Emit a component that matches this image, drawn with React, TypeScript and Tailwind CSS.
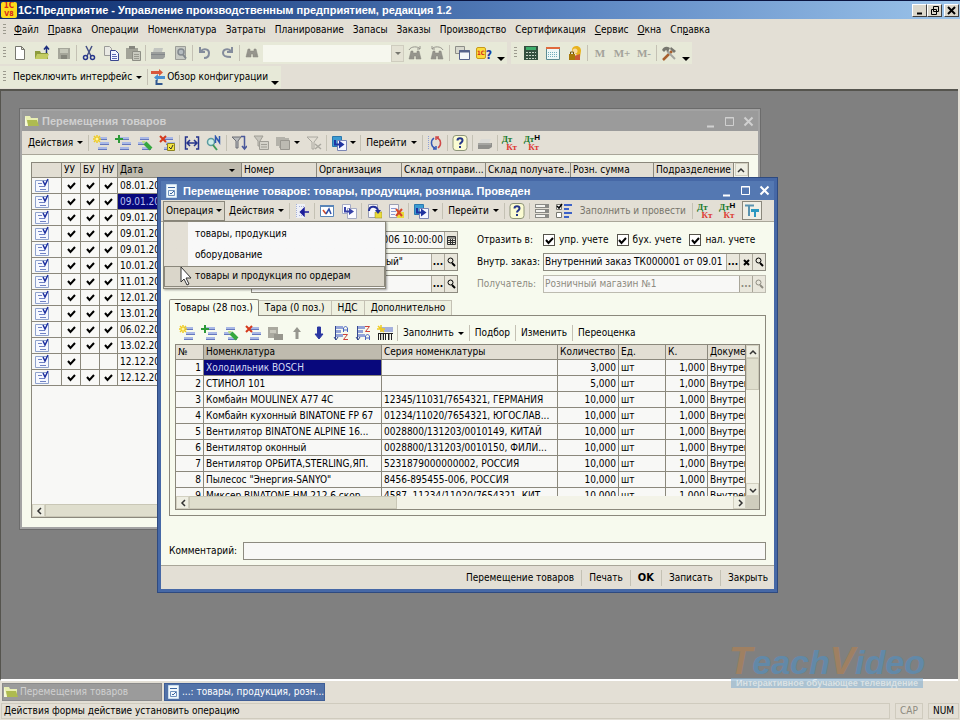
import React from "react";

type Kids = { children?: React.ReactNode };

/* ---------- icon drawings ---------- */

function Svg({ children, w = 16 }: Kids & { w?: number }) {
  return (
    <svg width={w} height="16" viewBox={`0 0 ${w} 16`} fill="none" className="block shrink-0" aria-hidden="true">
      {children}
    </svg>
  );
}

function Rows({ grey }: { grey?: boolean }) {
  const a = grey ? "#b4b2aa" : "#a9b8e6";
  const b = grey ? "#98968f" : "#6678bd";
  return (
    <>
      <path d="M5 2h9v3H5zM7 7h9v3H7zM5 12h9v3H5z" fill={a} />
      <path d="M5 4.500h9M7 9.500h9M5 14.500h9" stroke={b} />
    </>
  );
}

function Binoculars({ x = 0, y = 0 }: { x?: number; y?: number }) {
  return (
    <path
      transform={`translate(${x} ${y})`}
      d="M4 4h2v2h4V4h2l2 8h-5V9H7v3H2zM4 9v2M12 9v2"
      fill="#96958d"
      stroke="#85847d"
      strokeWidth="0.5"
    />
  );
}

const icons: Record<string, React.ReactNode> = {
  newDoc: <path d="M3.500 1.500h6l3 3v10h-9zM9.500 1.500v3h3" fill="#fff" stroke="#77776f" />,
  open: (
    <>
      <path d="M1 6h5l1 2h7v6H1z" fill="#8d9b3c" />
      <path d="M3 9h12l-2 5H1z" fill="#c3cc62" />
      <path d="M12.500 8V2M10 4.500 12.500 1.500 15 4.500" stroke="#1b2d7e" strokeWidth="1.500" />
    </>
  ),
  save: (
    <>
      <path d="M2 3h12v11H2z" fill="#a5a69a" />
      <path d="M4 4h8v4H4z" fill="#c5c7b9" />
      <path d="M5 10h6v4H5z" fill="#85867c" />
    </>
  ),
  cut: (
    <>
      <path d="M5 1l5 10M11 1 6 11" stroke="#444f85" strokeWidth="1.500" />
      <circle cx="4.500" cy="12.500" r="2" stroke="#26368c" strokeWidth="1.500" />
      <circle cx="11.500" cy="12.500" r="2" stroke="#26368c" strokeWidth="1.500" />
    </>
  ),
  copy: (
    <>
      <path d="M1.500 1.500h5l2 2v7h-7z" fill="#e9e9e4" stroke="#9a9a98" />
      <path d="M7.500 5.500h5l3 3v7h-8z" fill="#f2f4ff" stroke="#3a468f" />
      <path d="M9 9.500h4M9 11.500h5M9 13.500h5" stroke="#5b69b5" />
    </>
  ),
  paste: (
    <>
      <path d="M1 3h12v11H1z" fill="#a2a398" />
      <path d="M4 1h6v3H4z" fill="#85867d" />
      <path d="M7.500 6.500h8v9h-8z" fill="#c9cabf" stroke="#8d8e85" />
      <path d="M9 9.500h5M9 11.500h5M9 13.500h5" stroke="#999a90" />
    </>
  ),
  print: (
    <>
      <path d="M4 3h9l-1 4H3z" fill="#c2c5c0" />
      <path d="M1 7h14v5l-2 2H1z" fill="#9c9f9d" />
      <path d="M1 9.500h14" stroke="#83878a" />
    </>
  ),
  preview: (
    <>
      <path d="M3.500 1.500h10v13h-10z" fill="#c7cac4" stroke="#9b9d97" />
      <circle cx="9" cy="7" r="3" fill="#b5bcc0" stroke="#83898e" strokeWidth="1.500" />
      <path d="M11 9.500l3 4" stroke="#83898e" strokeWidth="2" />
    </>
  ),
  undo: <path d="M3 2v5h5M4 6c3-3 8-2 8 2 0 3-2 5-5 5" stroke="#848c9c" strokeWidth="2" />,
  redo: <path d="M13 2v5H8M12 6C9 3 4 4 4 8c0 3 2 4 8 4" stroke="#848c9c" strokeWidth="2" />,
  find: <Binoculars />,
  findNext: (
    <>
      <Binoculars y={2} />
      <path d="M2 5c2-4 9-4 11-1M13 1v3h-3" stroke="#96958d" />
    </>
  ),
  findPrev: (
    <>
      <Binoculars y={2} />
      <path d="M14 5C12 1 5 1 3 4M3 1v3h3" stroke="#96958d" />
    </>
  ),
  windows: (
    <>
      <path d="M1.500 1.500h9v7h-9z" fill="#d7d8cd" stroke="#8d8e88" />
      <path d="M5.500 5.500h10v9h-10z" fill="#f5f6fa" stroke="#56628c" />
      <path d="M5 6.500h11" stroke="#56628c" strokeWidth="2" />
    </>
  ),
  calc: (
    <>
      <path d="M1 1h14v14H1z" fill="#35503f" />
      <path d="M3 2h10v3H3z" fill="#3fae6c" />
      <path d="M3 7.500h10M3 10.500h10M3 13.500h10" stroke="#c8d3c6" strokeDasharray="2 1" />
    </>
  ),
  calendar: (
    <>
      <path d="M1.500 2.500h13v12h-13z" fill="#eef8f8" stroke="#5d8c93" />
      <path d="M1 3h14" stroke="#e0693c" strokeWidth="2" />
      <path d="M3 7.500h10M3 9.500h10M3 11.500h10" stroke="#71aebc" strokeDasharray="1 1" />
    </>
  ),
  user: (
    <>
      <path d="M5 6c-1-6 9-7 9 0l-1 6-3-2z" fill="#e8b21c" />
      <circle cx="8" cy="6" r="2.500" fill="#f5d9a0" />
      <path d="M7 11l6-2v6H7z" fill="#cb5a36" />
      <path d="M2 9h6v6H2z" fill="#a87a0a" />
      <path d="M3.500 9V7h3v2" stroke="#6f5208" />
    </>
  ),
  tools: (
    <>
      <path d="M2 15 11 6" stroke="#a8602d" strokeWidth="2.500" />
      <path d="M14 14 6 6" stroke="#a6a6a0" strokeWidth="2" />
      <path d="M1 5c2-4 5-4 8-2L7 7 5 5 3 7zM10 2l5 4-2 2-4-4z" fill="#77776f" />
    </>
  ),
  config: (
    <>
      <path d="M1 3h8V1l4 3.500L9 8V6H1z" fill="#d9573a" transform="translate(0 -1)" />
      <path d="M15 7H8V5L4 8.500 8 12v-2h7z" fill="#4a90d0" />
      <path d="M6.500 11v4h6" stroke="#31588f" strokeWidth="2" />
    </>
  ),
  add: (
    <>
      <Rows />
      <path d="M4 0v8M0 4h8M1 1l6 6M7 1 1 7" stroke="#f0cb20" strokeWidth="1.500" />
      <circle cx="4" cy="4" r="1.500" fill="#fff6a0" />
    </>
  ),
  addCopy: (
    <>
      <Rows />
      <path d="M4 0v8M0 4h8" stroke="#2d9a38" strokeWidth="2" />
    </>
  ),
  edit: (
    <>
      <path d="M3 2h9v3H3zM1 7h9v3H1zM5 12h9v3H5z" fill="#a9b8e6" />
      <path d="M3 4.500h9M1 9.500h9M5 14.500h9" stroke="#6678bd" />
      <path d="M8 8l6 6" stroke="#35a83e" strokeWidth="4" />
      <path d="M5 6l4 0-3 3z" fill="#bfe07c" />
    </>
  ),
  del: (
    <>
      <Rows />
      <path d="M1 1l6 6M7 1 1 7" stroke="#d5391d" strokeWidth="2" />
    </>
  ),
  mark: (
    <>
      <Rows />
      <path d="M1 1l6 6M7 1 1 7" stroke="#d5391d" strokeWidth="2" />
      <path d="M8.500 8.500h7v7h-7z" fill="#f5e640" stroke="#8d8420" />
      <path d="M10 12l2 2 2-4" stroke="#333" />
    </>
  ),
  interval: (
    <>
      <path d="M4 2H1.500v12H4M12 2h2.500v12H12" stroke="#26348c" strokeWidth="1.500" />
      <path d="M3 8h10M6 5 3 8l3 3M10 5l3 3-3 3" stroke="#26348c" strokeWidth="1.500" />
    </>
  ),
  findNum: (
    <>
      <circle cx="5" cy="7" r="3.500" fill="#cfeee8" stroke="#5a9aa0" strokeWidth="1.500" />
      <path d="M7 10l4 5" stroke="#3f9a58" strokeWidth="2" />
      <path d="M9.500 8V1.500l4 6V1" stroke="#2f58b0" strokeWidth="1.500" />
    </>
  ),
  filterSort: (
    <>
      <path d="M1 2h9L7 6v7H5V6z" fill="#b9bbbd" stroke="#6d6f76" />
      <path d="M13.500 1v12M11 11l2.500 3L16 11M10 1.500h4" stroke="#4a589b" strokeWidth="1.500" />
    </>
  ),
  filterForm: (
    <>
      <path d="M1 1h9L7 6v5H5V6z" fill="#c8c6be" stroke="#a09e96" />
      <path d="M6.500 6.500h9v8h-9z" fill="#d4d2c9" stroke="#a09e96" />
      <path d="M8 9.500h6M8 12h6" stroke="#a09e96" />
    </>
  ),
  filterHist: (
    <>
      <path d="M1 2h9v9H1zM4 3h10v10H4z" fill="#b4b2aa" />
      <path d="M5.500 5.500h9v9h-9z" fill="#bcbab2" stroke="#98968f" />
    </>
  ),
  filterOff: (
    <>
      <path d="M1 2h11L8 7v7H6V7z" stroke="#aaa8a0" />
      <path d="M9 9l6 5M15 9l-6 5" stroke="#aaa8a0" strokeWidth="1.500" />
    </>
  ),
  basedOn: (
    <>
      <path d="M1.500 1.500h9v10h-9z" fill="#3c9bd2" stroke="#2a78ae" />
      <path d="M6.500 5.500h9v10h-9z" fill="#f4f6ff" stroke="#7b86b5" />
      <path d="M4 5v4.500h5" stroke="#1f33a0" strokeWidth="2" />
      <path d="M8 5.500l5.500 4L8 13.500z" fill="#1f33a0" />
    </>
  ),
  refresh: (
    <>
      <path d="M1.500 1v14" stroke="#8da0d8" strokeDasharray="1 1" />
      <path d="M7 3C3 6 4 12 8 13M6 14h3v-3" stroke="#3458b5" strokeWidth="1.500" />
      <path d="M11 13c4-3 3-9-1-10M12 2H9v3" stroke="#d04848" strokeWidth="1.500" />
    </>
  ),
  help: (
    <>
      <rect x="1" y="0.500" width="14" height="15" rx="3" fill="#fbfbd2" stroke="#8e957a" />
      <path d="M5.500 5.500c0-3 5-3 5 0 0 2-2.500 2-2.500 4M8 11v2" stroke="#24368a" strokeWidth="2" />
    </>
  ),
  printer: (
    <>
      <path d="M4 4h10l-2 4H2z" fill="#dadad6" />
      <path d="M1 8h14v4l-3 2H1z" fill="#8f8f8c" />
      <path d="M1 9h13" stroke="#bbbbb7" />
    </>
  ),
  back: (
    <>
      <path d="M2 1h9v14H2z" fill="#eef0f7" />
      <path d="M2.500 1v14M5 3.500h5M5 12.500h5" stroke="#a6b0d5" strokeDasharray="1 1" />
      <path d="M15 9H8M10 5.500 6.500 9l3.500 3.500z" fill="#1e1e9b" stroke="#1e1e9b" strokeWidth="1.500" />
    </>
  ),
  chart: (
    <>
      <path d="M1.500 2.500h13v11h-13z" fill="#fff" stroke="#5a86b8" />
      <path d="M1 3h14" stroke="#5a86b8" strokeWidth="2" />
      <path d="M4 7l3 4" stroke="#d04a2a" strokeWidth="1.500" />
      <path d="M7 11l3-5 2 5" stroke="#2f4fa8" strokeWidth="1.500" />
    </>
  ),
  goDoc: (
    <>
      <path d="M1.500 1.500h8v9h-8z" fill="#fbfbff" stroke="#a5abc4" />
      <path d="M6.500 5.500h9v10h-9z" fill="#fbfbff" stroke="#a5abc4" />
      <path d="M4 4v4.500h5" stroke="#3742a8" strokeWidth="2" />
      <path d="M8 5l5 3.500L8 12z" fill="#3742a8" />
    </>
  ),
  post: (
    <>
      <path d="M2.500 1.500h9v13h-9z" fill="#f7f7fb" stroke="#9a9eb2" />
      <path d="M9 9h7v6H9z" fill="#e9da3a" stroke="#8f8522" strokeWidth="0.500" />
      <path d="M3 8c0-5 7-6 9-1" stroke="#22309a" strokeWidth="2" />
      <path d="M9 7h6l-3 4z" fill="#22309a" />
    </>
  ),
  unpost: (
    <>
      <path d="M1.500 1.500h9v13h-9z" fill="#f7f7fb" stroke="#9a9eb2" />
      <path d="M3 5.500h5M3 8.500h5M3 11.500h4" stroke="#8d9ad0" />
      <path d="M9 9h7v6H9z" fill="#e9da3a" />
      <path d="M8 6l6 7M14 6l-6 7" stroke="#d5452a" strokeWidth="2" />
    </>
  ),
  bars: (
    <>
      <path d="M1 1h14v4H1zM1 6h14v4H1zM1 11h14v4H1z" fill="#8a8a86" />
      <path d="M2 2h9v2H2zM2 7h9v2H2zM2 12h9v2H2z" fill="#f4f4f0" />
    </>
  ),
  checks: (
    <>
      <path d="M0.500 1.500h5v5h-5zM0.500 9.500h5v5h-5z" fill="#fff" stroke="#77776f" />
      <path d="M1 3l2 2 3-4" stroke="#000" strokeWidth="1.500" />
      <path d="M8 2h8M8 6h5M8 10h8M8 14h5" stroke="#3c62c8" strokeWidth="2" />
    </>
  ),
  filterT: (
    <>
      <path d="M1 2.500h9M5 3v10" stroke="#5a93b0" strokeWidth="2" />
      <path d="M7 6h8v3h-3v5h-2V9H7z" fill="#2a98c0" />
    </>
  ),
  greyForm: (
    <>
      <path d="M1 2h10v11H1z" fill="#aaa99f" />
      <path d="M7 9h9v6H7z" fill="#97968d" />
      <path d="M3 5h6v3H3z" fill="#c9c8bd" />
    </>
  ),
  up: <path d="M8 2l4 5H9.500v7h-3V7H4z" fill="#96968e" />,
  down: <path d="M8 14l4-5H9.500V2h-3v7H4z" fill="#2b37a2" stroke="#2b37a2" />,
  sortAsc: (
    <>
      <path d="M2 1h8v3H2zM2 5h6v3H2zM2 9h8v3H2z" fill="#93a3d8" />
      <path d="M2.500 1v14M1 12l2 3 2-3" stroke="#34468f" />
      <path d="M10.500 7V3l2-2 2 2v4M10.500 5h4" stroke="#4a66c0" />
      <path d="M10 9.500h4.500l-4 5H15" stroke="#cc4238" />
    </>
  ),
  sortDesc: (
    <>
      <path d="M2 1h8v3H2zM2 5h6v3H2zM2 9h8v3H2z" fill="#93a3d8" />
      <path d="M2.500 1v14M1 12l2 3 2-3" stroke="#34468f" />
      <path d="M10 1.500h4.500l-4 5H15" stroke="#cc4238" />
      <path d="M10.500 15v-4l2-2 2 2v4M10.500 13h4" stroke="#4a66c0" />
    </>
  ),
  barcode: (
    <>
      <path d="M3 2h13v5H3z" fill="#a5b1dd" />
      <path d="M4 0v7M0 4h8M1 1l6 6" stroke="#f0cb20" strokeWidth="1.500" />
      <path d="M1.500 8v7M3.500 8v7M6.500 8v7M8.500 8v7M11.500 8v7M14.500 8v7" stroke="#222" />
      <path d="M12.500 8v7M5 8v7" stroke="#444" strokeWidth="0.500" />
      <path d="M1 8.500h15" stroke="#222" />
    </>
  ),
  folder: (
    <>
      <path d="M1 3h5l1 2h7v8H1z" fill="#e9efb4" />
      <path d="M3 7h10l2 6H4z" fill="#aebb50" />
      <path d="M1 3v10h3z" fill="#f7fad8" />
    </>
  ),
  form: (
    <>
      <path d="M3.500 1.500h10v13h-10z" fill="#f2f8fc" stroke="#c7dcec" />
      <path d="M5 4.500h7" stroke="#3a65a0" />
      <path d="M5.500 7.500h6v5h-6z" stroke="#6f93bd" />
      <path d="M7 10l1 1 3-3" stroke="#3a65a0" />
    </>
  ),
  rowDoc: (
    <>
      <path d="M1.500 2.500h13v11h-13z" fill="#f6f8ff" stroke="#8fa2cc" />
      <path d="M4 5.500h4M5 8.500h6M6 11.500h6" stroke="#6f82c4" />
      <path d="M9 3l2 4 3-6" stroke="#1d2fa0" strokeWidth="1.500" />
    </>
  ),
};

function Icon({ name }: { name: string }) {
  return <Svg>{icons[name]}</Svg>;
}

function DtKt({ n }: { n?: boolean }) {
  return (
    <span className="flex w-4 flex-col font-['Liberation_Serif',serif] text-[9px] leading-[8px] font-bold">
      <span className="flex text-[#1b7a2c]">
        Дт{n && <span className="font-['Liberation_Sans',sans-serif] text-[8px] leading-[6px] text-black">Н</span>}
      </span>
      <span className="pl-1 text-[#dd3a34]">Кт</span>
    </span>
  );
}

function OneC() {
  return (
    <span className="flex h-4 w-4 flex-col items-center overflow-hidden rounded-xs bg-[#fbdc1c] text-[8px] leading-[8px] font-bold text-[#d5261c]">
      <span>1С</span>
      <span className="text-[7px]">V8</span>
    </span>
  );
}

function Caret() {
  return <span className="block border-x-[3px] border-t-[3px] border-x-transparent border-t-current" />;
}

/* ---------- toolbar parts ---------- */

function Tool({ name, label, caret }: { name: string; label: string; caret?: boolean }) {
  return (
    <button type="button" aria-label={label} className="flex h-5 shrink-0 items-center px-[3px]">
      <Icon name={name} />
      {caret && (
        <span className="pl-[3px]">
          <Caret />
        </span>
      )}
    </button>
  );
}

function TextTool({ children, caret }: Kids & { caret?: boolean }) {
  return (
    <button type="button" className="flex h-5 shrink-0 items-center gap-1 px-1 whitespace-nowrap">
      {children}
      {caret && <Caret />}
    </button>
  );
}

function Sep() {
  return <span className="mx-px h-4 w-px shrink-0 bg-[#c4c1b4]" />;
}

function Grip() {
  return <span className="mx-[3px] h-3 w-[3px] shrink-0 bg-[repeating-linear-gradient(#9c9a8e_0_1px,transparent_1px_3px)]" />;
}

function Overflow() {
  return (
    <span className="flex h-4 w-3 items-end justify-center text-black">
      <span className="block border-x-4 border-t-4 border-x-transparent border-t-black" />
    </span>
  );
}

function WinButtons({ className }: { className: string }) {
  return (
    <div className={`flex items-center gap-1 ${className}`}>
      {["M3 11.500h7", "M2.500 2.500h8v8h-8zM2 3h9", "M2.500 2.500l8 8M10.500 2.500l-8 8"].map((d, i) => (
        <button key={d} type="button" aria-label={["Свернуть", "Развернуть", "Закрыть"][i]} className="px-px">
          <svg width="13" height="13" viewBox="0 0 13 13" fill="none" stroke="currentColor" strokeWidth={i === 1 ? 1 : 2} className="block">
            <path d={d} />
          </svg>
        </button>
      ))}
    </div>
  );
}

function ScrollArrow({ dir }: { dir: "left" | "right" | "up" | "down" }) {
  const d = { left: "M7 2 4 5l3 3", right: "M4 2l3 3-3 3", up: "M2 7l3-3 3 3", down: "M2 4l3 3 3-3" }[dir];
  return (
    <span className="flex size-[13px] shrink-0 items-center justify-center border border-[#d2d0c0] bg-[#eeeee2]">
      <svg width="10" height="10" viewBox="0 0 10 10" fill="none" stroke="#333" strokeWidth="1.500">
        <path d={d} />
      </svg>
    </span>
  );
}

/* ---------- application frame ---------- */

function TitleBar() {
  return (
    <header className="flex h-[19px] items-center gap-px border-t border-[#0a1440] bg-linear-to-r from-[#0b2a6c] via-[#5c86c2] via-60% to-[#9cc4ea] px-px text-white">
      <OneC />
      <h1 className="flex-1 truncate font-['Liberation_Sans',Arial,sans-serif] text-[11px] leading-4 font-bold">
        1С:Предприятие - Управление производственным предприятием, редакция 1.2
      </h1>
      <div className="flex">
        {["M3 8.500h5", "M4.500 1.500h5v5h-5zM2.500 4.500h5v5h-5z", "M2 2l7 7M9 2 2 9"].map((d, i) => (
          <button
            key={d}
            type="button"
            aria-label={["Свернуть", "Восстановить", "Закрыть"][i]}
            className="flex h-[13px] w-[15px] items-center justify-center border border-t-white border-r-[#404040] border-b-[#404040] border-l-white bg-[#dcd8cc] last:ml-[2px]"
          >
            <svg width="11" height="11" viewBox="0 0 11 11" fill={i === 1 ? "#dcd8cc" : "none"} stroke="#000" strokeWidth={i === 1 ? 1 : 2}>
              <path d={d} />
            </svg>
          </button>
        ))}
      </div>
    </header>
  );
}

const menu: [string, string, string][] = [
  ["", "Ф", "айл"],
  ["", "П", "равка"],
  ["Операции", "", ""],
  ["Номенклатура", "", ""],
  ["Затраты", "", ""],
  ["Планирование", "", ""],
  ["Запасы", "", ""],
  ["Заказы", "", ""],
  ["Производство", "", ""],
  ["Сертификация", "", ""],
  ["", "С", "ервис"],
  ["", "О", "кна"],
  ["Сп", "р", "авка"],
];

function MainBars() {
  return (
    <div className="flex flex-col">
      <nav className="flex h-[22px] items-center gap-px">
        <Grip />
        {menu.map(([a, u, b]) => (
          <button key={a + u + b} type="button" className="px-1 whitespace-nowrap">
            {a}
            <span className="underline">{u}</span>
            {b}
          </button>
        ))}
      </nav>
      <div className="flex h-6 items-center gap-1">
        <div className="flex h-[22px] items-center bg-[#e7e9d8]">
          <Grip />
          <Tool name="newDoc" label="Создать" />
          <Tool name="open" label="Открыть" />
          <Tool name="save" label="Сохранить" />
          <Sep />
          <Tool name="cut" label="Вырезать" />
          <Tool name="copy" label="Копировать" />
          <Tool name="paste" label="Вставить" />
          <Sep />
          <Tool name="print" label="Печать" />
          <Tool name="preview" label="Просмотр" />
          <Sep />
          <Tool name="undo" label="Отменить" />
          <Tool name="redo" label="Вернуть" />
          <Sep />
          <Tool name="find" label="Найти" />
          <div className="flex h-[17px] w-[141px] bg-[#f6f7ee]">
            <input aria-label="Поиск" className="min-w-0 flex-1 bg-transparent px-1 outline-none" />
            <button type="button" aria-label="История поиска" className="flex w-[13px] items-center justify-center border border-[#cfcdbf] bg-[#e4e2d4] text-[#77776f]">
              <Caret />
            </button>
          </div>
          <Tool name="findNext" label="Найти следующий" />
          <Tool name="findPrev" label="Найти предыдущий" />
          <Sep />
          <Tool name="windows" label="Окна" />
          <button type="button" aria-label="О программе" className="flex h-5 w-[22px] items-center justify-center">
            <span className="h-3 w-[10px] rounded-xs border border-[#c89a18] bg-[#fbdc3c] text-[6px] leading-[10px] font-bold text-[#d5261c]">1С</span>
            <span className="pt-1 text-[12px] font-bold text-[#1b3a9c]">?</span>
          </button>
          <Overflow />
        </div>
        <div className="flex h-[22px] items-center bg-[#e7e9d8]">
          <Grip />
          <Tool name="calc" label="Калькулятор" />
          <Tool name="calendar" label="Календарь" />
          <Tool name="user" label="Пользователь" />
          <Sep />
          {["M", "M+", "M-"].map((t) => (
            <button key={t} type="button" className="w-[22px] text-center font-['Liberation_Serif',serif] text-[11px] font-bold text-[#a3a29a]">
              {t}
            </button>
          ))}
          <Sep />
          <Tool name="tools" label="Настройка" />
          <Overflow />
        </div>
      </div>
      <div className="flex h-6 items-center">
        <div className="flex h-[22px] items-center bg-[#e7e9d8]">
          <Grip />
          <TextTool caret>Переключить интерфейс</TextTool>
          <Sep />
          <button type="button" className="flex h-5 items-center gap-px px-px whitespace-nowrap">
            <Icon name="config" />
            Обзор конфигурации
          </button>
          <Overflow />
        </div>
      </div>
    </div>
  );
}

/* ---------- list window ---------- */

const thBase = "h-[15px] overflow-hidden border-r border-b border-[#8b887c] px-[2px] text-left font-normal whitespace-nowrap";
const th = `${thBase} bg-[#e2ded3]`;
const thCurrent = `${thBase} bg-[#bfbbae]`;
const td = "h-4 overflow-hidden border-r border-b border-[#8b887c] px-[2px] leading-[15px] whitespace-nowrap";

const journal: [string, boolean][] = [
  ["08.01.2006", true],
  ["09.01.2006", true],
  ["09.01.2006", true],
  ["09.01.2006", true],
  ["09.01.2006", true],
  ["10.01.2006", true],
  ["11.01.2006", true],
  ["12.01.2006", true],
  ["13.01.2006", true],
  ["06.02.2006", true],
  ["13.02.2006", true],
  ["12.12.2006", false],
  ["12.12.2006", true],
];

function Tick() {
  return (
    <svg width="9" height="9" viewBox="0 0 9 9" fill="none" stroke="#000" strokeWidth="2" className="mx-auto block">
      <path d="M1 4l2.500 3L8 2" />
    </svg>
  );
}

function ListWindow() {
  return (
    <section className="absolute top-[18px] left-[19px] flex h-[420px] w-[740px] flex-col border-2 border-[#a3a3a3] bg-[#f7faee] shadow-[0_0_0_1px_#6c6c6c]">
      <div className="flex h-5 shrink-0 items-center gap-[2px] bg-[#9b9b9b] px-[2px] text-[#d0d0d0]">
        <Icon name="folder" />
        <h2 className="flex-1 font-['Liberation_Sans',Arial,sans-serif] text-[11px] font-bold">Перемещения товаров</h2>
        <WinButtons className="text-[#d0d0d0]" />
      </div>
      <div className="flex h-6 shrink-0 items-center border-b border-[#a9a699] bg-[#e3dfd5] px-[2px]">
        <TextTool caret>Действия</TextTool>
        <Sep />
        <Tool name="add" label="Добавить" />
        <Tool name="addCopy" label="Скопировать" />
        <Tool name="edit" label="Изменить" />
        <Tool name="mark" label="Пометить" />
        <Sep />
        <Tool name="interval" label="Интервал дат" />
        <Tool name="findNum" label="Найти по номеру" />
        <Sep />
        <Tool name="filterSort" label="Отбор и сортировка" />
        <Tool name="filterForm" label="Отбор" />
        <Tool name="filterHist" label="История отборов" caret />
        <Tool name="filterOff" label="Отключить отбор" />
        <Sep />
        <Tool name="basedOn" label="На основании" caret />
        <Sep />
        <TextTool caret>Перейти</TextTool>
        <Sep />
        <Tool name="refresh" label="Обновить" />
        <Sep />
        <Tool name="help" label="Справка" />
        <Sep />
        <Tool name="printer" label="Печать" />
        <Sep />
        <button type="button" className="px-[3px]"><DtKt /></button>
        <button type="button" className="px-[3px]"><DtKt n /></button>
      </div>
      <div className="mx-[9px] mt-[7px] mb-[9px] flex min-h-0 flex-1 flex-col border border-[#8b887c] bg-[#f8f8f6]">
        <div className="flex min-h-0 flex-1">
          <div className="min-w-0 flex-1 overflow-hidden">
            <table className="w-full table-fixed border-separate border-spacing-0">
              <colgroup>
                <col className="w-[30px]" />
                <col className="w-[19px]" />
                <col className="w-[19px]" />
                <col className="w-[18px]" />
                <col className="w-[124px]" />
                <col className="w-[75px]" />
                <col className="w-[85px]" />
                <col className="w-[84px]" />
                <col className="w-[85px]" />
                <col className="w-[83px]" />
                <col />
              </colgroup>
              <thead>
                <tr>
                  <th className={th} />
                  <th className={th}>УУ</th>
                  <th className={th}>БУ</th>
                  <th className={th}>НУ</th>
                  <th className={thCurrent}>
                    <span className="flex items-center justify-between pr-1">
                      Дата <Caret />
                    </span>
                  </th>
                  <th className={th}>Номер</th>
                  <th className={th}>Организация</th>
                  <th className={th}>Склад отправи...</th>
                  <th className={th}>Склад получате...</th>
                  <th className={th}>Розн. сумма</th>
                  <th className={th}>Подразделение</th>
                </tr>
              </thead>
              <tbody>
                {journal.map(([date, all], i) => (
                  <tr key={i}>
                    <td className={td}>
                      <span className="flex h-[15px] items-center"><Icon name="rowDoc" /></span>
                    </td>
                    <td className={td}><Tick /></td>
                    <td className={td}>{all && <Tick />}</td>
                    <td className={td}>{all && <Tick />}</td>
                    <td className={`${td} ${i === 1 ? "bg-[#08087c] text-[#b8c0f0]" : ""}`}>{date}</td>
                    {[5, 6, 7, 8, 9, 10].map((c) => (
                      <td key={c} className={td} />
                    ))}
                  </tr>
                ))}
              </tbody>
            </table>
          </div>
          <div className="flex w-[14px] flex-col items-center bg-[#f3f3e8]">
            <ScrollArrow dir="up" />
          </div>
        </div>
        <div className="flex h-[13px] shrink-0 bg-[#f3f3e8]">
          <ScrollArrow dir="left" />
          <span className="w-[400px] border border-[#c9c7b6] bg-[#dfdecd]" />
        </div>
      </div>
    </section>
  );
}

/* ---------- document window ---------- */

const field = "flex h-[18px] border border-[#8d8b80] bg-[#f8f8f6]";

function FieldButton({ children, label }: Kids & { label: string }) {
  return (
    <button type="button" aria-label={label} className="flex w-[13px] shrink-0 items-center justify-center border-l border-[#a9a699] bg-[#e9e7dc] font-bold">
      {children}
    </button>
  );
}

function Lens() {
  return (
    <svg width="10" height="10" viewBox="0 0 10 10" fill="none" stroke="currentColor">
      <circle cx="4.500" cy="3.500" r="2.500" />
      <path d="M6 6l3 3" strokeWidth="2" />
    </svg>
  );
}

function Check({ children }: Kids) {
  return (
    <label className="flex items-center gap-1 whitespace-nowrap">
      <span className="grid size-3 place-items-center">
        <input type="checkbox" defaultChecked className="col-start-1 row-start-1 size-3 appearance-none border border-[#55534b] bg-white" />
        <span className="pointer-events-none col-start-1 row-start-1"><Tick /></span>
      </span>
      {children}
    </label>
  );
}

const goods: [string, string, string][] = [
  ["Холодильник BOSCH", "", "3,000"],
  ["СТИНОЛ 101", "", "5,000"],
  ["Комбайн MOULINEX  A77 4C", "12345/11031/7654321, ГЕРМАНИЯ", "10,000"],
  ["Комбайн кухонный BINATONE FP 67", "01234/11020/7654321, ЮГОСЛАВ...", "10,000"],
  ["Вентилятор BINATONE ALPINE 16...", "0028800/131203/0010149, КИТАЙ", "10,000"],
  ["Вентилятор оконный", "0028800/131203/0010150, ФИЛИ...", "10,000"],
  ["Вентилятор ОРБИТА,STERLING,ЯП.", "5231879000000002, РОССИЯ", "10,000"],
  ["Пылесос \"Энергия-SANYO\"", "8456-895455-006, РОССИЯ", "10,000"],
  ["Миксер BINATONE HM 212 6 скор.", "4587, 11234/11020/7654321, КИТ...", "10,000"],
];

function GoodsTable() {
  return (
    <div className="mx-[5px] mb-[5px] flex flex-col border border-[#8b887c] bg-[#f8f8f6]">
      <div className="flex h-[151px]">
        <div className="min-w-0 flex-1 overflow-hidden">
          <table className="w-full table-fixed border-separate border-spacing-0">
            <colgroup>
              <col className="w-[28px]" />
              <col className="w-[178px]" />
              <col className="w-[176px]" />
              <col className="w-[61px]" />
              <col className="w-[47px]" />
              <col className="w-[42px]" />
              <col />
            </colgroup>
            <thead>
              <tr>
                <th className={th}>№</th>
                <th className={thCurrent}>Номенклатура</th>
                <th className={th}>Серия номенклатуры</th>
                <th className={th}>Количество</th>
                <th className={th}>Ед.</th>
                <th className={th}>К.</th>
                <th className={th}>Документ</th>
              </tr>
            </thead>
            <tbody>
              {goods.map(([name, series, qty], i) => (
                <tr key={name}>
                  <td className={`${td} text-right`}>{i + 1}</td>
                  <td className={`${td} ${i === 0 ? "bg-[#08087c] text-[#d5daf5]" : ""}`}>{name}</td>
                  <td className={td}>{series}</td>
                  <td className={`${td} text-right`}>{qty}</td>
                  <td className={td}>шт</td>
                  <td className={`${td} text-right`}>1,000</td>
                  <td className={td}>Внутренний</td>
                </tr>
              ))}
            </tbody>
          </table>
        </div>
        <div className="flex w-[13px] flex-col bg-[#f3f3e8]">
          <ScrollArrow dir="up" />
          <span className="h-8 border border-[#c9c7b6] bg-[#dfdecd]" />
          <span className="flex-1" />
          <ScrollArrow dir="down" />
        </div>
      </div>
      <div className="flex h-[13px] bg-[#f3f3e8]">
        <ScrollArrow dir="left" />
        <span className="w-[208px] border border-[#c9c7b6] bg-[#dfdecd]" />
        <span className="flex-1" />
        <ScrollArrow dir="right" />
        <span className="w-[13px] bg-[#cfcdbd]" />
      </div>
    </div>
  );
}

function OperationMenu() {
  return (
    <div role="menu" className="absolute top-[19px] -left-px z-10 flex w-[223px] flex-col border border-[#8b887c] bg-linear-to-r from-[#e3dfd5] from-[24px] to-[#f8f8f8] to-[24px] pt-[2px] pb-px shadow-[1px_1px_2px_#00000060]">
      <button type="button" role="menuitem" className="h-[21px] pl-[31px] text-left">товары, продукция</button>
      <button type="button" role="menuitem" className="h-[21px] pl-[31px] text-left">оборудование</button>
      <button type="button" role="menuitem" className="h-[21px] border border-[#8b887c] bg-[#dad6ca] pl-[30px] text-left">
        товары и продукция по ордерам
      </button>
      <svg width="12" height="20" viewBox="0 0 12 20" className="absolute top-[44px] left-[16px]">
        <path d="M1 1v15l3-3 3 6 2-1-3-6h5z" fill="#fff" stroke="#333" />
      </svg>
    </div>
  );
}

function DocumentWindow() {
  return (
    <section className="absolute top-[87px] left-[157px] flex w-[619px] flex-col border-[3px] border-[#4668a6] bg-[#f7faee] shadow-[0_0_0_1px_#2e4a80]">
      <div className="flex h-[19px] items-center gap-1 bg-[#5478b2] px-[2px] text-white">
        <Icon name="form" />
        <h2 className="flex-1 truncate font-['Liberation_Sans',Arial,sans-serif] text-[11px] font-bold">Перемещение товаров: товары, продукция, розница. Проведен</h2>
        <WinButtons className="text-white" />
      </div>
      <div className="flex h-[22px] items-center border-b border-[#a9a699] bg-[#e3dfd5] px-[2px]">
        <div className="relative border border-[#8b887c] bg-[#dcd8cc]">
          <button type="button" className="flex h-[18px] items-center gap-[3px] px-[2px]">
            Операция <Caret />
          </button>
          <OperationMenu />
        </div>
        <TextTool caret>Действия</TextTool>
        <Sep />
        <Tool name="back" label="Список" />
        <Sep />
        <Tool name="chart" label="Проводки" />
        <Tool name="goDoc" label="Структура" />
        <Sep />
        <Tool name="post" label="Провести" />
        <Tool name="unpost" label="Отменить проведение" />
        <Sep />
        <Tool name="basedOn" label="На основании" caret />
        <Sep />
        <TextTool caret>Перейти</TextTool>
        <Sep />
        <Tool name="help" label="Справка" />
        <Sep />
        <Tool name="bars" label="Табло" />
        <Tool name="checks" label="Флажки" />
        <button type="button" className="px-[5px] whitespace-nowrap text-[#77756b]">Заполнить и провести</button>
        <Sep />
        <button type="button" className="px-[3px]"><DtKt /></button>
        <button type="button" className="px-[3px]"><DtKt n /></button>
        <button type="button" aria-label="Советы" className="ml-1 flex h-[19px] w-5 items-center justify-center border border-[#8b887c] bg-[#f0efe6]">
          <Icon name="filterT" />
        </button>
      </div>

      <div className="flex flex-col px-2 pt-[9px]">
        <div className="flex items-start justify-between">
          <div className="grid grid-cols-[82px_207px] items-center gap-y-1">
            <label htmlFor="date">Номер:</label>
            <div className={field}>
              <input id="date" defaultValue="ТК000001 от 09.01.2006 10:00:00" className="min-w-0 flex-1 bg-transparent px-px text-right outline-none" />
              <FieldButton label="Календарь">
                <svg width="9" height="9" viewBox="0 0 9 9" fill="none" stroke="#333">
                  <path d="M0.500 0.500h8v8h-8zM0 2h9M1 4.500h7M1 6.500h7M3.500 3v6M5.500 3v6" />
                </svg>
              </FieldButton>
            </div>
            <label htmlFor="org">Организация:</label>
            <div className={field}>
              <input id="org" defaultValue="Торг. дом &quot;Комплексный&quot;" className="min-w-0 flex-1 bg-transparent pr-7 text-right outline-none" />
              <FieldButton label="Выбрать">...</FieldButton>
              <FieldButton label="Открыть"><Lens /></FieldButton>
            </div>
            <label htmlFor="from">Отправитель:</label>
            <div className={field}>
              <input id="from" defaultValue="Склад электротоваров" className="min-w-0 flex-1 bg-transparent px-[3px] outline-none" />
              <FieldButton label="Выбрать">...</FieldButton>
              <FieldButton label="Открыть"><Lens /></FieldButton>
            </div>
          </div>
          <div className="grid grid-cols-[66px_223px] items-center gap-y-1">
            <span>Отразить в:</span>
            <div className="flex h-[18px] items-center gap-2">
              <Check>упр. учете</Check>
              <Check>бух. учете</Check>
              <Check>нал. учете</Check>
            </div>
            <label htmlFor="order" className="whitespace-nowrap">Внутр. заказ:</label>
            <div className={field}>
              <input id="order" defaultValue="Внутренний заказ ТК000001 от 09.01" className="min-w-0 flex-1 bg-transparent px-px outline-none" />
              <FieldButton label="Выбрать">...</FieldButton>
              <FieldButton label="Очистить">
                <svg width="7" height="7" viewBox="0 0 7 7" stroke="#000" strokeWidth="2"><path d="M1 1l5 5M6 1 1 6" /></svg>
              </FieldButton>
              <FieldButton label="Открыть"><Lens /></FieldButton>
            </div>
            <label htmlFor="to" className="text-[#8d8b80]">Получатель:</label>
            <div className="flex h-[18px] border border-[#bdbbb0] bg-[#f8f8f6] text-[#8d8b80]">
              <input id="to" disabled defaultValue="Розничный магазин №1" className="min-w-0 flex-1 bg-transparent px-px outline-none" />
              <FieldButton label="Выбрать">...</FieldButton>
              <FieldButton label="Открыть"><Lens /></FieldButton>
            </div>
          </div>
        </div>

        <div className="mt-[6px] flex items-end">
          <button type="button" className="z-10 -mb-px h-[17px] rounded-t-xs border border-b-0 border-[#8b887c] bg-[#f7faee] px-[5px] whitespace-nowrap">
            Товары (28 поз.)
          </button>
          {["Тара (0 поз.)", "НДС", "Дополнительно"].map((t) => (
            <button key={t} type="button" className="h-[15px] border-t border-r border-[#c4c1b4] bg-[#eef0e0] px-[6px] whitespace-nowrap">
              {t}
            </button>
          ))}
        </div>
        <div className="flex flex-col border border-[#8b887c]">
          <div className="flex h-[28px] items-center px-[6px] pt-[6px]">
            <Tool name="add" label="Добавить" />
            <Tool name="addCopy" label="Скопировать" />
            <Tool name="edit" label="Изменить" />
            <Tool name="del" label="Удалить" />
            <Tool name="greyForm" label="Закончить" />
            <Tool name="up" label="Вверх" />
            <Tool name="down" label="Вниз" />
            <Tool name="sortAsc" label="По возрастанию" />
            <Tool name="sortDesc" label="По убыванию" />
            <Tool name="barcode" label="Штрихкод" />
            <Sep />
            <TextTool caret>Заполнить</TextTool>
            <Sep />
            <TextTool>Подбор</TextTool>
            <Sep />
            <TextTool>Изменить</TextTool>
            <Sep />
            <TextTool>Переоценка</TextTool>
          </div>
          <GoodsTable />
        </div>

        <div className="mt-[26px] mb-[5px] flex items-center">
          <label htmlFor="comment" className="w-[74px]">Комментарий:</label>
          <input id="comment" className="h-[18px] min-w-0 flex-1 border border-[#8d8b80] bg-[#f8f8f6] px-1 outline-none" />
        </div>
      </div>

      <footer className="flex h-[24px] items-center justify-end border-t border-[#a9a699] bg-[#e3dfd5]">
        <button type="button" className="px-[6px]">Перемещение товаров</button>
        <Sep />
        <button type="button" className="px-[6px]">Печать</button>
        <Sep />
        <button type="button" className="px-[6px] text-[11px] font-bold">OK</button>
        <Sep />
        <button type="button" className="px-[6px]">Записать</button>
        <Sep />
        <button type="button" className="px-[6px]">Закрыть</button>
      </footer>
    </section>
  );
}

function Logo() {
  return (
    <div className="absolute right-[35px] -bottom-[9px] z-10 flex w-[192px] flex-col opacity-60">
      <div className="flex items-baseline justify-center font-['Liberation_Sans',sans-serif] text-[34px] leading-[32px] font-bold text-[#4f8fc4] italic">
        <span className="text-[38px] text-[#b5804f]">T</span>
        <span>each</span>
        <span className="text-[38px] text-[#b5804f]">V</span>
        <span>ideo</span>
      </div>
      <div className="h-[10px] bg-[#86b0cf] text-center font-['Liberation_Sans',sans-serif] text-[9px] leading-[10px] font-bold whitespace-nowrap text-[#d3e3ee]">
        Интерактивное обучающее телевидение
      </div>
    </div>
  );
}

export default function App() {
  return (
    <div className="flex min-h-screen flex-col bg-[#e3dfd5] font-['DejaVu_Sans_Condensed','Liberation_Sans',Arial,sans-serif] text-[10px] leading-[14px] text-black">
      <TitleBar />
      <MainBars />
      <main className="relative mr-[2px] min-h-[590px] flex-1 border-t-2 border-b-2 border-l border-t-[#55544e] border-b-white border-l-[#55544e] bg-[#808080]">
        <ListWindow />
        <DocumentWindow />
        <Logo />
      </main>
      <div className="flex h-[21px] items-center gap-[2px] px-[2px]">
        <button type="button" className="flex h-[18px] w-[160px] items-center gap-px border border-[#8b8b8b] bg-[#9b9b9b] whitespace-nowrap text-[#d0d0d0]">
          <Icon name="folder" />
          Перемещения товаров
        </button>
        <button type="button" className="flex h-[18px] w-[161px] items-center gap-px border border-[#3f5e96] bg-[#5272a8] whitespace-nowrap text-white">
          <Icon name="form" />
          ...: товары, продукция, розн...
        </button>
      </div>
      <footer className="flex h-[18px] items-center gap-[5px] px-px">
        <span className="h-4 flex-1 border border-[#cfcbbe] px-[2px]">Действия формы действие установить операцию</span>
        <span className="h-4 border border-[#cfcbbe] px-1 text-[#8d8b80]">CAP</span>
        <span className="h-4 border border-[#cfcbbe] px-1">NUM</span>
      </footer>
    </div>
  );
}
